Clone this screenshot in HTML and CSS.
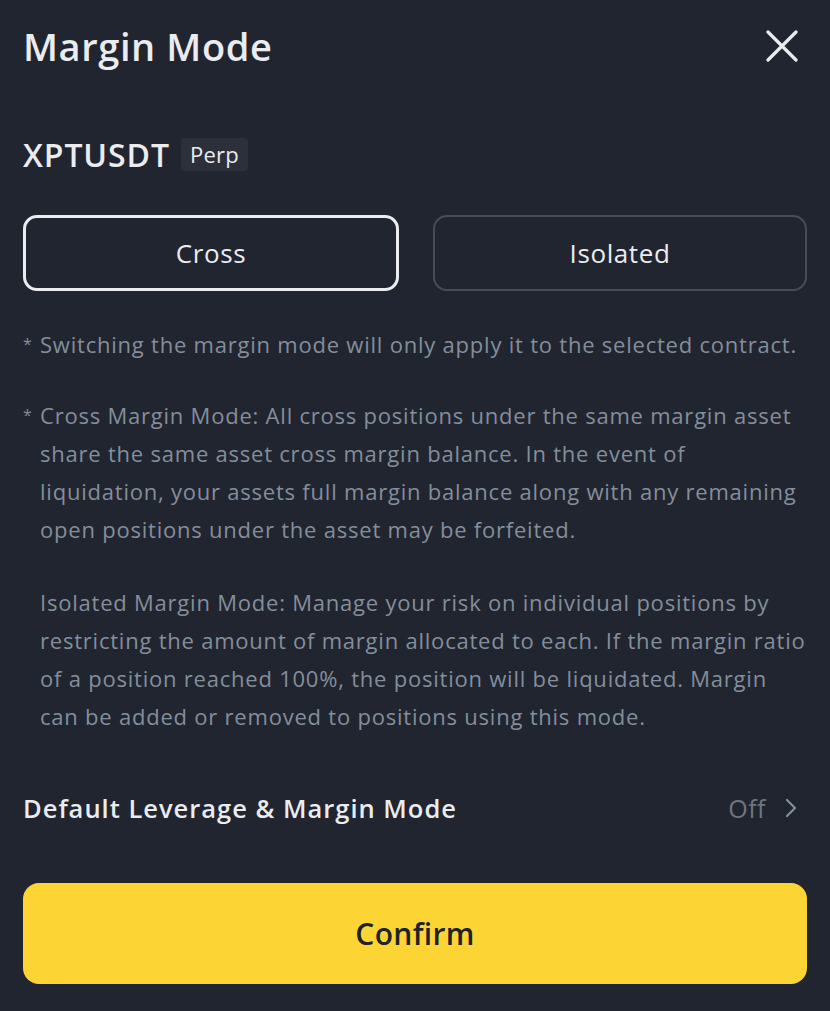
FILE: index.html
```html
<!DOCTYPE html>
<html lang="en">
<head>
    <meta charset="UTF-8">
    <meta name="viewport" content="width=device-width, initial-scale=1.0">
    <title>Margin Mode</title>
    <link rel="stylesheet" href="styles.css">
</head>
<body>

    <!-- Margin mode sheet -->
    <div class="sheet">
        <div class="sheet-header">
            <h2>Margin Mode</h2>
            <span class="close">
                <svg width="32" height="32" viewBox="0 0 32 32">
                    <path d="M2 2 L30 30 M30 2 L2 30" stroke="#EAECEF" stroke-width="3.2" stroke-linecap="round"/>
                </svg>
            </span>
        </div>

        <div class="symbol">
            <span class="symbol-name">XPTUSDT</span>
            <span class="badge">Perp</span>
        </div>

        <div class="mode-tabs">
            <button class="mode active">Cross</button>
            <button class="mode">Isolated</button>
        </div>

        <div class="notes">
            <div class="note">
                <span class="star">*</span>
                <p>Switching the margin mode will only apply it to the selected contract.</p>
            </div>
            <div class="note">
                <span class="star">*</span>
                <div>
                    <p>Cross Margin Mode: All cross positions under the same margin asset share the same asset cross margin balance. In the event of liquidation, your assets full margin balance along with any remaining open positions under the asset may be forfeited.</p>
                    <p class="gap">Isolated Margin Mode: Manage your risk on individual positions by restricting the amount of margin allocated to each. If the margin ratio of a position reached 100%, the position will be liquidated. Margin can be added or removed to positions using this mode.</p>
                </div>
            </div>
        </div>

        <div class="setting-row">
            <span class="setting-label">Default Leverage &amp; Margin Mode</span>
            <span class="setting-value">
                Off
                <svg width="14" height="22" viewBox="0 0 14 22">
                    <path d="M3 3 L11 11 L3 19" fill="none" stroke="#848E9C" stroke-width="2.2" stroke-linecap="round" stroke-linejoin="round"/>
                </svg>
            </span>
        </div>

        <button class="confirm">Confirm</button>
    </div>

</body>
</html>
```

FILE: styles.css
```css
/* CSS */
body {
    font-family: "Open Sans", Lato, sans-serif;
    background-color: #20252F;
    color: #EAECEF;
    margin: 0;
    padding: 0;
}

.sheet {
    padding: 18px 23px 0 23px;
    display: flex;
    flex-direction: column;
}

.sheet-header {
    display: flex;
    justify-content: space-between;
    align-items: center;
    height: 56px;
}

.sheet-header h2 {
    margin: 0;
    font-size: 38px;
    font-weight: 600;
    letter-spacing: 0.6px;
}

.close {
    display: flex;
    margin-right: 9px;
}

.symbol {
    display: flex;
    align-items: center;
    gap: 11px;
    margin-top: 63px;
    height: 34px;
}

.symbol-name {
    font-size: 32px;
    font-weight: 600;
    letter-spacing: 0.9px;
}

.badge {
    background-color: #2B303B;
    font-size: 22px;
    padding: 1px 9px;
    border-radius: 4px;
    line-height: 31px;
    letter-spacing: 0.3px;
}

.mode-tabs {
    display: flex;
    gap: 34px;
    margin-top: 44px;
}

.mode {
    flex: 1;
    height: 76px;
    background-color: transparent;
    color: #EAECEF;
    border: 2px solid #474D57;
    border-radius: 14px;
    font-family: inherit;
    font-size: 26px;
    letter-spacing: 0.6px;
}

.mode.active {
    border: 3px solid #EAECEF;
}

.notes {
    margin-top: 34px;
    color: #848E9C;
    font-size: 22px;
    line-height: 38px;
    letter-spacing: 0.78px;
}

.note {
    display: flex;
    margin-bottom: 33px;
}

.star {
    width: 17px;
    flex-shrink: 0;
    font-size: 16px;
    letter-spacing: 0;
}

.note p {
    margin: 0;
}

.note p.gap {
    margin-top: 35px;
}

.setting-row {
    display: flex;
    justify-content: space-between;
    align-items: center;
    margin-top: 20px;
    height: 40px;
}

.setting-label {
    font-size: 25.5px;
    font-weight: 600;
    letter-spacing: 1px;
}

.setting-value {
    display: flex;
    align-items: center;
    gap: 18px;
    color: #6E7582;
    font-size: 25px;
    letter-spacing: 0.5px;
    margin-right: 9px;
}

.confirm {
    margin-top: 55px;
    height: 101px;
    background-color: #FCD535;
    color: #1E2329;
    border: none;
    border-radius: 16px;
    font-family: inherit;
    font-size: 30px;
    font-weight: 600;
    letter-spacing: 0.3px;
}
```
